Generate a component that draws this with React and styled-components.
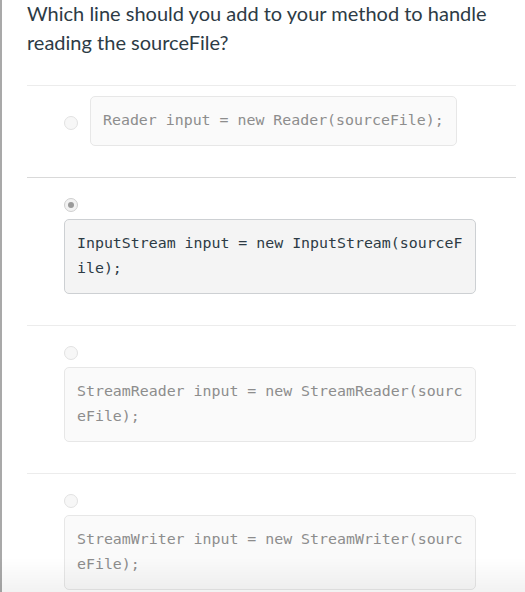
import React from 'react';
import styled, { createGlobalStyle } from 'styled-components';

const GlobalStyle = createGlobalStyle`
	html, body {
		margin: 0;
		padding: 0;
		background: #fff;
	}
	body {
		font-family: Lato, "Open Sans", sans-serif;
		color: #2d3b45;
		overflow: hidden;
	}
`;

const Page = styled.div`
	min-height: 592px;
	border-left: 2px solid #a9a9a9;
	box-sizing: border-box;
	padding-left: 25px;
	padding-right: 10px;
`;

const Question = styled.p`
	margin: -1px 0 0;
	font-size: 20px;
	line-height: 29px;
	color: #2d3b45;
`;

const Answers = styled.div`
	margin-top: 28px;
	width: 489px;
`;

const Answer = styled.div`
	border-top: 1px solid ${p => (p.$dark ? '#d9d9d9' : '#ececec')};
	padding: 10px 0 31px 37px;
`;

const Row = styled.div`
	display: flex;
	flex-wrap: wrap;
	align-items: center;
	column-gap: 12px;
	width: 412px;
`;

const RadioCell = styled.div`
	height: 31px;
	display: flex;
	align-items: center;
	padding-top: 4px;
	box-sizing: border-box;
`;

const Radio = styled.span`
	width: 12px;
	height: 12px;
	border-radius: 50%;
	border: 1px solid ${p => (p.$checked ? '#cfcfcf' : '#e2e2e2')};
	background: ${p => (p.$checked ? '#f2f2f2' : '#f7f7f7')};
	display: flex;
	align-items: center;
	justify-content: center;

	&::after {
		content: '';
		display: ${p => (p.$checked ? 'block' : 'none')};
		width: 6px;
		height: 6px;
		border-radius: 50%;
		background: #9a9a9a;
	}
`;

const Code = styled.pre`
	margin: 0;
	padding: 11px 12px;
	min-width: 0;
	border-radius: 5px;
	border: 1px solid ${p => (p.$active ? '#cdd0d3' : '#e7e7e7')};
	background: ${p => (p.$active ? '#f4f4f4' : '#fafafa')};
	color: ${p => (p.$active ? '#2d3b45' : '#8d8d8d')};
	font-family: "DejaVu Sans Mono", "Liberation Mono", monospace;
	font-size: 14.9px;
	line-height: 25.5px;
	white-space: pre-wrap;
	word-break: break-all;
`;

const BottomFade = styled.div`
	position: fixed;
	left: 0;
	right: 0;
	bottom: 0;
	height: 34px;
	pointer-events: none;
	background: linear-gradient(rgba(0, 0, 0, 0), rgba(0, 0, 0, 0.05));
`;

const answers = [
	{ code: 'Reader input = new Reader(sourceFile);' },
	{ code: 'InputStream input = new InputStream(sourceFile);', checked: true },
	{ code: 'StreamReader input = new StreamReader(sourceFile);' },
	{ code: 'StreamWriter input = new StreamWriter(sourceFile);' },
];

export default function App() {
	return (
		<>
			<GlobalStyle />
			<Page>
				<Question>
					Which line should you add to your method to handle reading the sourceFile?
				</Question>
				<Answers>
					{answers.map((a, i) => (
						<Answer key={i} $dark={i === 1}>
							<Row>
								<RadioCell>
									<Radio $checked={a.checked} />
								</RadioCell>
								<Code $active={a.checked}>{a.code}</Code>
							</Row>
						</Answer>
					))}
				</Answers>
			</Page>
			<BottomFade />
		</>
	);
}
